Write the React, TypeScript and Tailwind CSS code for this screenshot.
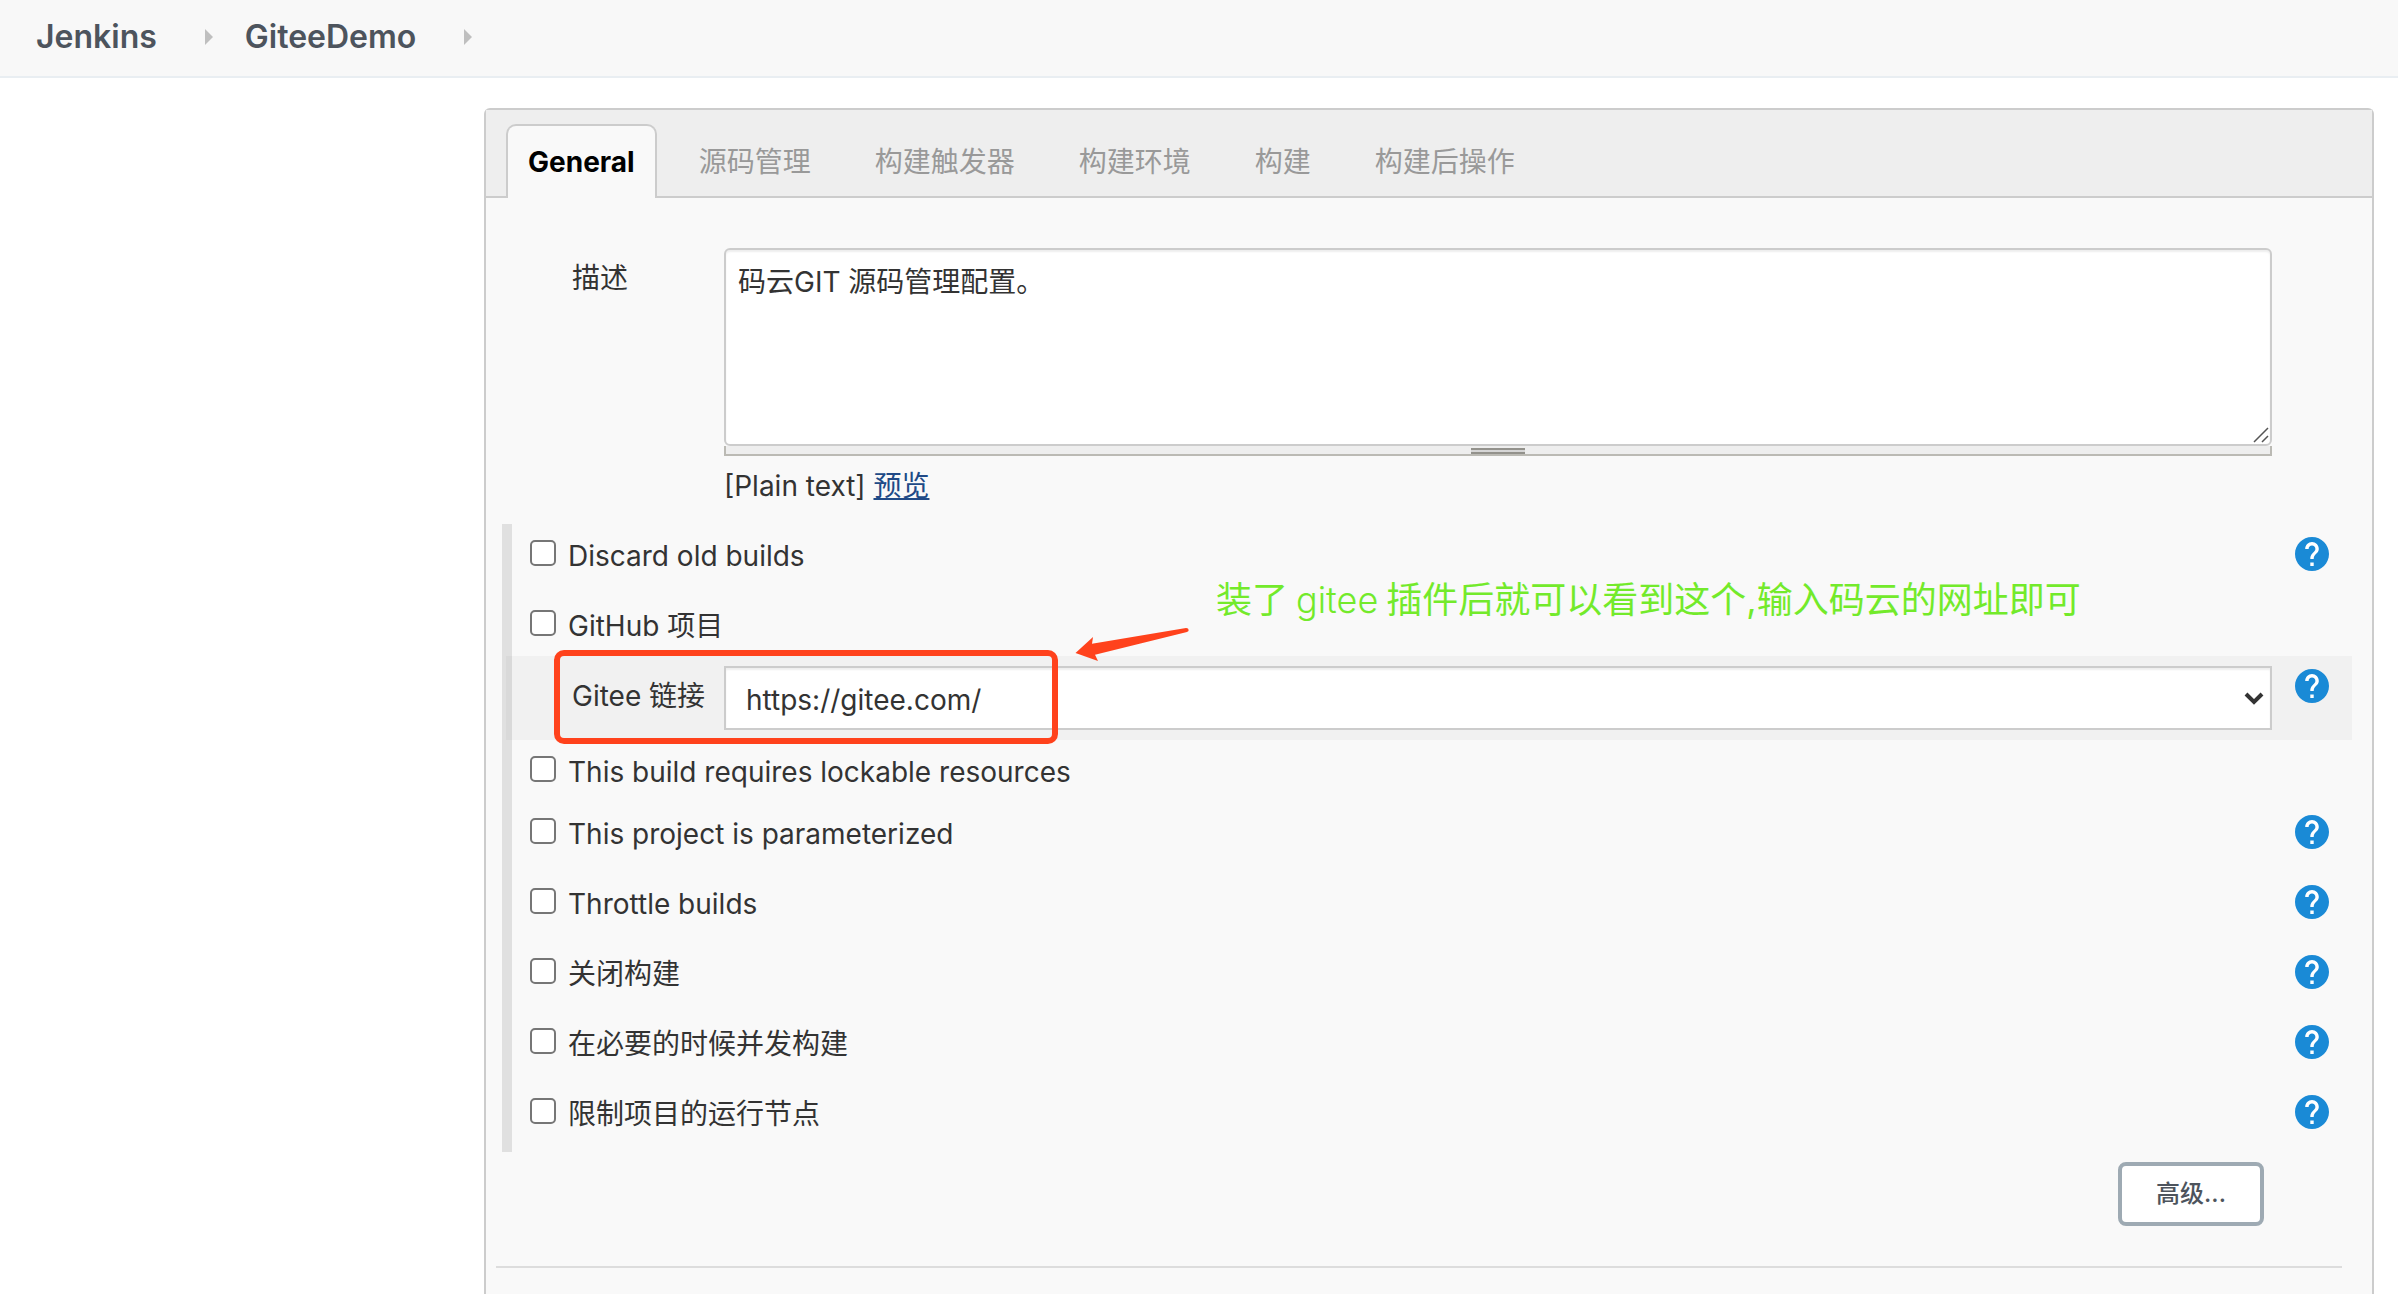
import { useState } from "react";

const tabs = ["General", "源码管理", "构建触发器", "构建环境", "构建", "构建后操作"];

const optionsBefore = [
  { id: "discard", label: "Discard old builds", help: true },
  { id: "github", label: "GitHub 项目", help: false },
];

const optionsAfter = [
  { id: "lockable", label: "This build requires lockable resources", help: false },
  { id: "parameterized", label: "This project is parameterized", help: true },
  { id: "throttle", label: "Throttle builds", help: true },
  { id: "disable", label: "关闭构建", help: true },
  { id: "concurrent", label: "在必要的时候并发构建", help: true },
  { id: "restrict", label: "限制项目的运行节点", help: true },
];

function HelpButton({ topic }: { topic: string }) {
  return (
    <button type="button" aria-label={`Help: ${topic}`} className="block size-[34px] shrink-0">
      <svg viewBox="2 2 20 20" className="size-full">
        <circle cx="12" cy="12" r="9" fill="#fff" />
        <path
          fill="#1a8ad6"
          d="M12 2C6.48 2 2 6.48 2 12s4.48 10 10 10 10-4.48 10-10S17.52 2 12 2zm1 17h-2v-2h2v2zm2.07-7.75l-.9.92C13.45 12.9 13 13.5 13 15h-2v-.5c0-1.1.45-2.1 1.17-2.83l1.24-1.26c.37-.36.59-.86.59-1.41 0-1.1-.9-2-2-2s-2 .9-2 2H8c0-2.21 1.79-4 4-4s4 1.79 4 4c0 .88-.36 1.68-.93 2.25z"
        />
      </svg>
    </button>
  );
}

function Separator() {
  return (
    <svg viewBox="0 0 8 16" className="h-4 w-2 shrink-0" aria-hidden="true">
      <path d="M0 0L8 8L0 16Z" fill="#bfbfbf" />
    </svg>
  );
}

function OptionRow({ id, label, help }: { id: string; label: string; help: boolean }) {
  return (
    <div className={`flex items-start pl-[18px] pr-[23px] ${help ? "h-[70px]" : "h-[62px]"}`}>
      <input
        id={id}
        type="checkbox"
        className="mt-4 size-[26px] shrink-0 appearance-none rounded-[5px] border-2 border-[#767676] bg-white checked:bg-[#1a8ad6]"
      />
      <label htmlFor={id} className="mt-3.5 flex-1 pl-3 leading-9">
        {label}
      </label>
      {help && (
        <div className="mt-[13px]">
          <HelpButton topic={label} />
        </div>
      )}
    </div>
  );
}

export default function App() {
  const [active, setActive] = useState("General");

  return (
    <div className="flex min-h-screen flex-col bg-white font-['Inter','Noto_Sans_CJK_SC',sans-serif] text-[28px] leading-9 text-[#333]">
      {/* Breadcrumbs */}
      <nav className="flex h-[78px] items-center border-b-2 border-[#e9eef2] bg-[#f8f8f8] pb-0.5 pl-9 text-[32px] font-semibold text-[#4d545d]">
        <a href="#jenkins">Jenkins</a>
        <span className="pl-12 pr-8">
          <Separator />
        </span>
        <a href="#giteedemo">GiteeDemo</a>
        <span className="pl-12">
          <Separator />
        </span>
      </nav>

      <main className="flex flex-1 pr-6 pt-[30px]">
        <div className="w-[484px] shrink-0" />
        <form className="min-w-0 flex-1 rounded-t-md border-2 border-b-0 border-[#ccc] bg-[#f9f9f9]">
          {/* Tabs */}
          <div className="flex h-[88px] items-end border-b-2 border-[#ccc] bg-[#eee] pl-5">
            {tabs.map((tab) => (
              <button
                key={tab}
                type="button"
                onClick={() => setActive(tab)}
                className={
                  active === tab
                    ? "-mb-0.5 mr-2.5 h-[74px] rounded-t-[10px] border-2 border-b-0 border-[#ccc] bg-[#f9f9f9] px-5 font-bold text-black"
                    : "h-[72px] px-8 pt-1 text-[#999]"
                }
              >
                {tab}
              </button>
            ))}
          </div>

          {/* Description */}
          <div className="flex items-start pl-[86px] pr-[100px] pt-[50px]">
            <label htmlFor="description" className="w-[152px] shrink-0 pt-3">
              描述
            </label>
            <div className="min-w-0 flex-1">
              <div className="relative">
                <textarea
                  id="description"
                  defaultValue="码云GIT 源码管理配置。"
                  className="block h-[198px] w-full resize-none rounded-md border-2 border-[#ccc] bg-white px-3 py-3.5 shadow-[inset_0_2px_2px_rgba(0,0,0,0.07)]"
                />
                <svg
                  viewBox="0 0 16 16"
                  className="pointer-events-none absolute bottom-[3px] right-[3px] size-4"
                  aria-hidden="true"
                >
                  <path d="M1 15L15 1M9 15L15 9" fill="none" stroke="#555" strokeWidth="1.5" />
                </svg>
              </div>
              <div className="flex h-2.5 justify-center border-2 border-t-0 border-[#bbbab4] bg-[#eee] pt-0.5">
                <div className="h-1.5 w-[54px] border-y-2 border-[#93928c] bg-[#d6d6d6]" />
              </div>
              <p className="pt-3">
                [Plain text]{" "}
                <a href="#preview" className="text-[#204a87] underline">
                  预览
                </a>
              </p>
            </div>
          </div>

          {/* Build options */}
          <div className="ml-4 mr-5 mt-5 border-l-[10px] border-[#e0e0e0]">
            {optionsBefore.map((option) => (
              <OptionRow key={option.id} {...option} />
            ))}

            <div className="relative -ml-1.5 flex h-[84px] items-start bg-black/[0.03] pl-[66px] pr-[23px] pt-2.5">
              <label htmlFor="gitee" className="w-[152px] shrink-0 pt-3">
                Gitee 链接
              </label>
              <div className="relative min-w-0 flex-1">
                <select
                  id="gitee"
                  className="block h-16 w-full appearance-none border-2 border-[#ccc] bg-white px-5 pt-1 shadow-[inset_0_2px_2px_rgba(0,0,0,0.07)]"
                >
                  <option>https://gitee.com/</option>
                </select>
                <svg
                  viewBox="0 0 20 14"
                  className="pointer-events-none absolute right-2 top-[26px] h-3.5 w-5"
                  aria-hidden="true"
                >
                  <path d="M2 2L10 10L18 2" fill="none" stroke="#333" strokeWidth="4" />
                </svg>
              </div>
              <div className="pl-[23px] pt-[3px]">
                <HelpButton topic="Gitee 链接" />
              </div>

              {/* Callout */}
              <div className="pointer-events-none absolute -top-1.5 left-12 h-[94px] w-[504px] rounded-[10px] border-6 border-[#ff421c]" />
              <svg
                viewBox="0 0 116 36"
                className="pointer-events-none absolute -top-[30px] left-[568px] h-9 w-[116px]"
                aria-hidden="true"
              >
                <path
                  d="M1.5 27L19 11L18 17.7L112 2Q115 2 114.5 5L113 6L21 28.7L24 35Z"
                  fill="#ff421c"
                />
              </svg>
              <p className="pointer-events-none absolute -top-20 left-[710px] whitespace-nowrap text-4xl leading-[48px] text-[#73ea2b]">
                装了<span className="mx-2 font-light">gitee</span>
                插件后就可以看到这个,输入码云的网址即可
              </p>
            </div>

            {optionsAfter.map((option) => (
              <OptionRow key={option.id} {...option} />
            ))}
          </div>

          <div className="flex justify-end pr-[108px] pt-2.5">
            <button
              type="button"
              className="h-16 w-[146px] rounded-lg border-4 border-[#9eaab3] bg-white text-2xl font-medium text-[#4d545d]"
            >
              高级...
            </button>
          </div>

          <hr className="ml-2.5 mr-[30px] mt-10 border-t-2 border-[#ddd]" />
        </form>
      </main>
    </div>
  );
}
